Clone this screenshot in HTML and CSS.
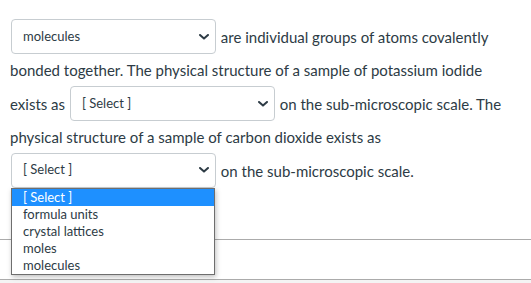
FILE: index.html
```html
<!DOCTYPE html>
<html>
<head>
<meta charset="utf-8">
<link rel="stylesheet" href="styles.css">
</head>
<body>
<div class="page">
  <div class="question">
    <p class="text"><span class="select"><span class="select-value">molecules</span><svg class="chev" width="10" height="6" viewBox="0 0 10 6"><path d="M1 1 L5 4.6 L9 1" fill="none" stroke="#2d3b45" stroke-width="2" stroke-linecap="round" stroke-linejoin="round"/></svg></span> are individual groups of atoms covalently<br>bonded together. The physical structure of a sample of potassium iodide<br>exists as <span class="select"><span class="select-value">[ Select ]</span><svg class="chev" width="10" height="6" viewBox="0 0 10 6"><path d="M1 1 L5 4.6 L9 1" fill="none" stroke="#2d3b45" stroke-width="2" stroke-linecap="round" stroke-linejoin="round"/></svg></span> on the sub-microscopic scale. The<br>physical structure of a sample of carbon dioxide exists as<br><span class="select open"><span class="select-value">[ Select ]</span><svg class="chev" width="10" height="6" viewBox="0 0 10 6"><path d="M1 1 L5 4.6 L9 1" fill="none" stroke="#2d3b45" stroke-width="2" stroke-linecap="round" stroke-linejoin="round"/></svg><span class="menu"><span class="option active">[ Select ]</span><span class="option">formula units</span><span class="option">crystal lattices</span><span class="option">moles</span><span class="option">molecules</span></span></span> on the sub-microscopic scale.</p>
  </div>
  <div class="band"></div>
  <div class="rest"></div>
</div>
</body>
</html>
```

FILE: styles.css
```css
html, body {
  margin: 0;
  padding: 0;
  height: 100%;
}
body {
  font-family: Lato, "Open Sans", sans-serif;
  color: #2d3b45;
  background: #ffffff;
}
.page {
  display: flex;
  flex-direction: column;
  height: 100%;
}
.question {
  padding: 21px 10px 0;
  height: 239px;
  box-sizing: border-box;
  position: relative;
  z-index: 2;
}
.text {
  margin: 0;
  font-size: 15px;
  line-height: 33.4px;
  white-space: nowrap;
}
.select {
  display: inline-flex;
  align-items: center;
  justify-content: space-between;
  position: relative;
  box-sizing: border-box;
  width: 205px;
  height: 35px;
  padding: 0 6px 2px 11px;
  border: 1px solid #c7cdd1;
  border-radius: 4px;
  background: #fff;
  font-size: 13px;
  line-height: 16px;
  vertical-align: middle;
  margin: -6px 1px -1px 1px;
}
.select-value {
  color: #2d3b45;
}
.chev {
  display: block;
  margin-top: 2px;
}
.menu {
  position: absolute;
  left: -1px;
  top: 34px;
  width: 204px;
  box-sizing: border-box;
  border: 1px solid #6e6e6e;
  background: #fff;
  box-shadow: 1px 2px 5px rgba(0, 0, 0, 0.25);
  display: flex;
  flex-direction: column;
  z-index: 5;
}
.option {
  display: block;
  height: 17px;
  line-height: 17px;
  padding-left: 11px;
  font-size: 13px;
  color: #2d3b45;
}
.option.active {
  background: #1e90ff;
  color: #ffffff;
}
.band {
  height: 41px;
  box-sizing: border-box;
  border-top: 1px solid #ababab;
  border-bottom: 1px solid #ababab;
  background: #fff;
}
.rest {
  flex: 1;
  background: #f4f4f4;
}
```
